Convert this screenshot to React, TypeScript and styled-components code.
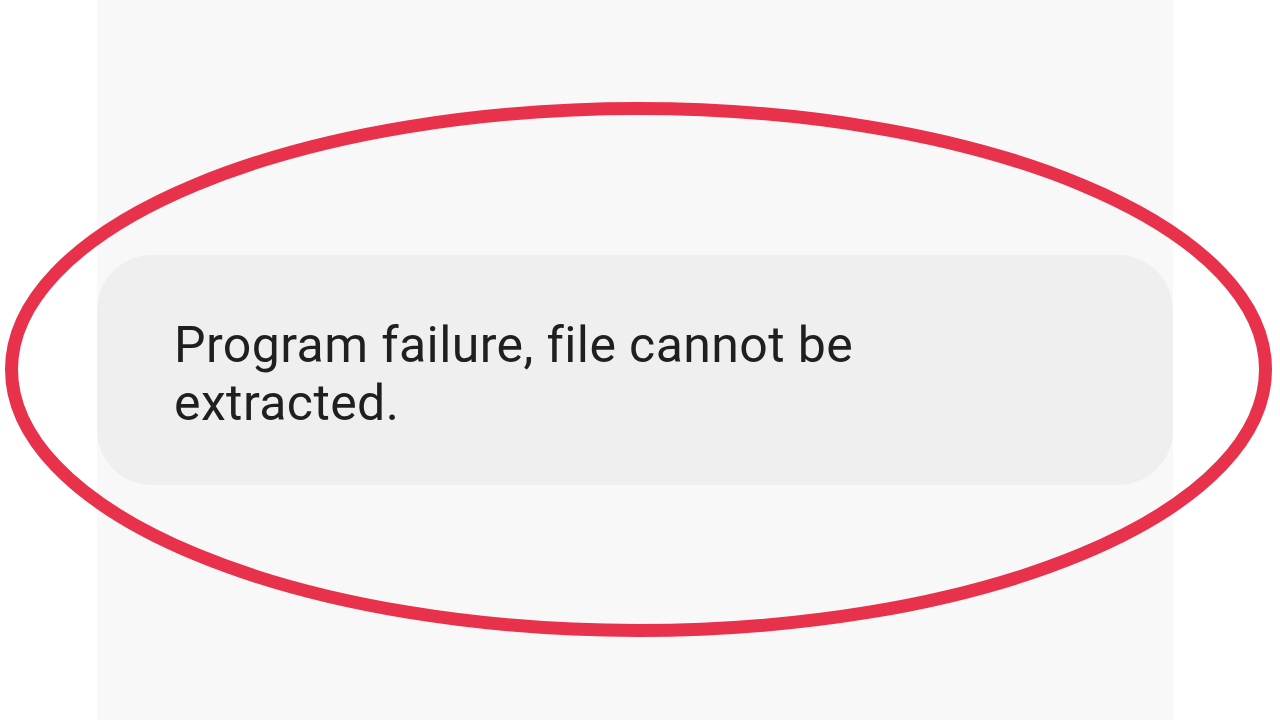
import React from 'react';
import styled, { createGlobalStyle } from 'styled-components';

const Global = createGlobalStyle`
  html, body {
    margin: 0;
    padding: 0;
    background: #ffffff;
  }
`;

const Page = styled.div`
  position: relative;
  width: 1280px;
  height: 720px;
  overflow: hidden;
  background: #ffffff;
`;

const Screen = styled.div`
  margin-left: 97px;
  width: 1076px;
  height: 720px;
  background: #f8f8f9;
  padding-top: 255px;
  box-sizing: border-box;
`;

const Toast = styled.div`
  height: 230px;
  border-radius: 55px;
  background: #efefef;
  padding: 61px 60px 0 77px;
  box-sizing: border-box;
`;

const Message = styled.p`
  margin: 0;
  width: 760px;
  font-family: Roboto, 'Liberation Sans', sans-serif;
  font-size: 50px;
  line-height: 58px;
  letter-spacing: 0.4px;
  color: #1f1f1f;
`;

const Mark = styled.svg`
  position: absolute;
  left: 0;
  top: 0;
  pointer-events: none;
`;

const App: React.FC = () => {
  return (
    <Page>
      <Global />
      <Screen>
        <Toast>
          <Message>Program failure, file cannot be extracted.</Message>
        </Toast>
      </Screen>
      <Mark width="1280" height="720" viewBox="0 0 1280 720">
        <ellipse cx="638.5" cy="369.5" rx="627" ry="261" fill="none" stroke="#e8314a" strokeWidth="13" />
      </Mark>
    </Page>
  );
};

export default App;
